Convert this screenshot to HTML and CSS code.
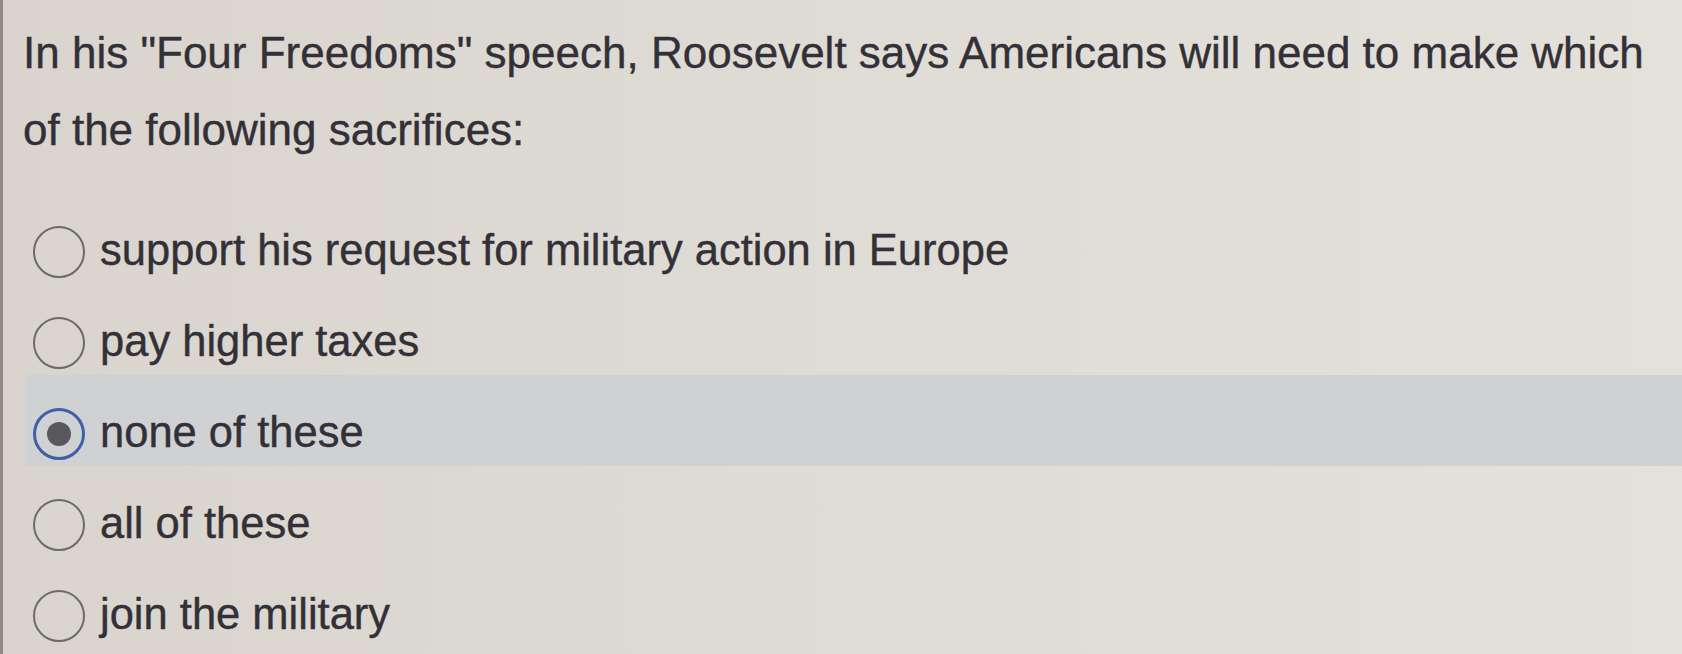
FILE: index.html
```html
<!DOCTYPE html>
<html lang="en">
<head>
    <meta charset="UTF-8">
    <meta name="viewport" content="width=device-width, initial-scale=1.0">
    <title>Quiz Question</title>
    <link rel="stylesheet" href="styles.css">
</head>
<body>
    <div class="question">
        <p class="prompt">In his "Four Freedoms" speech, Roosevelt says Americans will need to make which of the following sacrifices:</p>

        <ul class="choices">
            <li class="choice">
                <span class="radio"></span>
                <span class="label">support his request for military action in Europe</span>
            </li>
            <li class="choice">
                <span class="radio"></span>
                <span class="label">pay higher taxes</span>
            </li>
            <li class="choice selected">
                <span class="radio"></span>
                <span class="label">none of these</span>
            </li>
            <li class="choice">
                <span class="radio"></span>
                <span class="label">all of these</span>
            </li>
            <li class="choice">
                <span class="radio"></span>
                <span class="label">join the military</span>
            </li>
        </ul>
    </div>
</body>
</html>
```

FILE: styles.css
```css
html, body {
    height: 100%;
}
body {
    margin: 0;
    font-family: "Liberation Sans", Arial, sans-serif;
    color: #333037;
    background: linear-gradient(90deg, #d9d5ce 0%, #dfdcd5 50%, #e4e1db 100%);
    overflow: hidden;
}
.question {
    height: 100%;
    border-left: 3px solid #8e8c88;
    box-sizing: border-box;
}
.prompt {
    margin: 0;
    padding: 14px 20px 0 20px;
    font-size: 44px;
    line-height: 77px;
    -webkit-text-stroke: 0.4px #333037;
}
.choices {
    list-style: none;
    margin: 25px 0 0 22px;
    padding: 0;
}
.choice {
    display: flex;
    align-items: center;
    height: 91px;
    box-sizing: border-box;
    padding: 32px 0 5px 8px;
}
.choice.selected {
    background: #cfd1d3;
}
.radio {
    flex: none;
    width: 52px;
    height: 52px;
    border: 2px solid #6c6b6b;
    border-radius: 50%;
    box-sizing: border-box;
}
.selected .radio {
    border: 3.5px solid #3f5fa6;
    display: flex;
    align-items: center;
    justify-content: center;
}
.selected .radio::after {
    content: "";
    width: 24px;
    height: 24px;
    border-radius: 50%;
    background: #58585e;
}
.label {
    margin-left: 15px;
    padding-bottom: 4px;
    font-size: 43.5px;
    line-height: 50px;
    -webkit-text-stroke: 0.4px #333037;
}
```
